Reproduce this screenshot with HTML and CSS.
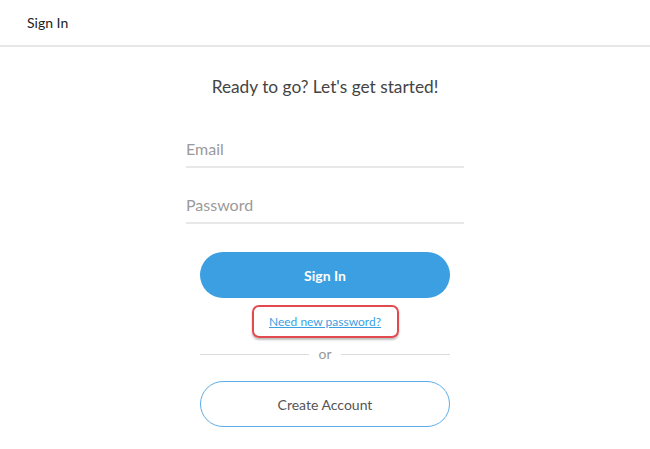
FILE: index.html
```html
<!DOCTYPE html>
<html>
<head>
<meta charset="utf-8">
<link rel="stylesheet" href="styles.css">
</head>
<body>
<header class="topbar">Sign In</header>
<main class="panel">
  <h1 class="title">Ready to go? Let's get started!</h1>
  <div class="field"><span class="placeholder">Email</span></div>
  <div class="field"><span class="placeholder">Password</span></div>
  <button class="btn btn-primary">Sign In</button>
  <div class="forgot"><a href="#" class="forgot-link">Need new password?</a></div>
  <div class="divider"><span class="line"></span><span class="or">or</span><span class="line"></span></div>
  <button class="btn btn-outline">Create Account</button>
</main>
</body>
</html>
```
FILE: styles.css
```css
* { box-sizing: border-box; }
html, body { margin: 0; padding: 0; background: #fff; }
body { font-family: Lato, "Open Sans", sans-serif; color: #333; }
.topbar {
  height: 47px;
  padding: 14px 0 0 27px;
  font-size: 14px;
  color: #222;
  border-bottom: 2px solid #e6e6e6;
}
.panel {
  display: flex;
  flex-direction: column;
  align-items: center;
}
.title {
  margin: 28px 0 0;
  font-size: 17.3px;
  font-weight: 400;
  color: #444;
  line-height: 24px;
}
.field {
  width: 278px;
  height: 44px;
  border-bottom: 2px solid #e8e8e8;
  display: flex;
  align-items: flex-end;
  padding-bottom: 7px;
}
.field:first-of-type { margin-top: 25px; }
.field + .field { margin-top: 12px; }
.placeholder { font-size: 16px; color: #9a9a9a; line-height: 20px; }
.btn {
  width: 250px;
  height: 46px;
  border-radius: 23px;
  font-family: inherit;
  font-size: 14px;
  cursor: pointer;
}
.btn-primary {
  margin-top: 28px;
  background: #3b9fe1;
  border: none;
  color: #fff;
  font-weight: 700;
}
.forgot {
  margin-top: 7px;
  width: 147px;
  height: 33px;
  border: 2px solid #e34a4f;
  border-radius: 7px;
  box-shadow: 0 2px 2px rgba(0,0,0,0.25);
  display: flex;
  align-items: center;
  justify-content: center;
}
.forgot-link { font-size: 12px; color: #3b9fe1; text-decoration: underline; }
.divider {
  width: 250px;
  margin-top: 8px;
  display: flex;
  align-items: center;
  gap: 9px;
}
.divider .line { flex: 1; height: 1px; background: #dcdcdc; }
.or { font-size: 14px; color: #999; line-height: 16px; }
.btn-outline {
  margin-top: 19px;
  background: #fff;
  border: 1.5px solid #5aade8;
  color: #555;
}
```
